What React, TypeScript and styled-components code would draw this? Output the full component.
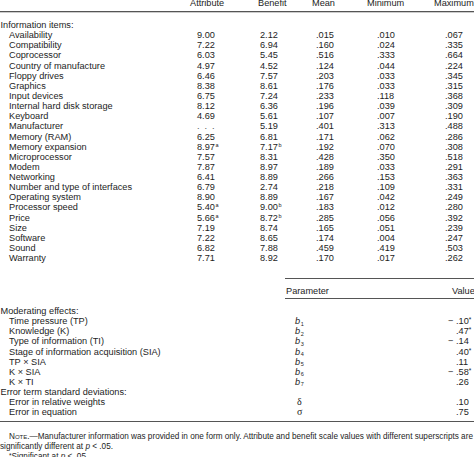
import React from 'react';
import styled, { createGlobalStyle } from 'styled-components';

const Global = createGlobalStyle`
  html, body { margin: 0; padding: 0; background: #fff; overflow: hidden; }
  body { font-family: "Liberation Sans", Arial, Helvetica, sans-serif; color: #1d1d1d; }
`;

const COLS = '185px 65px 55px 55px 65px 75px';
const RULE = '1px solid #555';

const Page = styled.div`
  width: 500px;
  margin-top: -2px;
  font-size: 9.2px;
  line-height: 10.15px;
`;

const HeadRow = styled.div`
  display: grid;
  grid-template-columns: ${COLS};
  padding-bottom: 3px;
  border-bottom: ${RULE};
  box-shadow: 0 0.6px 0 #aaa;
  width: 474px;
`;

const Body = styled.div`
  padding-top: 7.8px;
`;

const Row = styled.div`
  display: grid;
  grid-template-columns: ${COLS};
  height: 10.15px;
  white-space: nowrap;
`;

const Label = styled.div<{ $indent?: boolean }>`
  padding-left: ${p => (p.$indent ? 9 : 0.5)}px;
  white-space: nowrap;
`;

const Cell = styled.div<{ $pad: number }>`
  padding-left: ${p => p.$pad}px;
  white-space: nowrap;
`;

const Sup = styled.sup`
  font-size: 5.5px;
  line-height: 0;
  vertical-align: 3px;
  margin-left: 0.5px;
`;

const Dots = styled.span`
  letter-spacing: 1.2px;
  color: #555;
`;

const LOWER = '285px 155px 60px';

const Lower = styled.div`
  margin-top: 14.4px;
`;

const ParamHead = styled.div`
  display: grid;
  grid-template-columns: ${LOWER};
`;

const ParamHeadCell = styled.div<{ $pad: number }>`
  padding: 7.2px 0 1.5px ${p => p.$pad}px;
  border-top: ${RULE};
  border-bottom: ${RULE};
  white-space: nowrap;
`;

const LowerBody = styled.div`
  padding-top: 7.4px;
  padding-bottom: 3.6px;
  border-bottom: ${RULE};
  width: 474px;
`;

const LowerRow = styled.div`
  display: grid;
  grid-template-columns: ${LOWER};
  height: 10.15px;
  white-space: nowrap;
`;

const Param = styled.div<{ $pad: number }>`
  padding-left: ${p => p.$pad}px;
`;

const ParamB = styled.span`
  font-style: italic;
`;

const Sub = styled.sub`
  font-size: 5.5px;
  line-height: 0;
  vertical-align: -1.5px;
  margin-left: 0.5px;
`;

const Greek = styled.span`
  font-family: "Liberation Serif", "DejaVu Serif", serif;
  font-size: 10px;
`;

const Value = styled.div`
  padding-left: 8px;
  white-space: nowrap;
`;

const Sign = styled.span`
  width: 8px;
  display: inline-block;
`;

const Star = styled.span`
  display: inline-block;
  font-size: 6.5px;
  line-height: 6px;
  vertical-align: top;
  margin-top: 1px;
`;

const Notes = styled.div`
  padding-top: 9.6px;
  font-size: 8.2px;
  line-height: 10px;
  white-space: nowrap;
`;

const NoteLine = styled.div<{ $indent?: boolean }>`
  padding-left: ${p => (p.$indent ? 9 : 0)}px;
`;

const SmallCaps = styled.span`
  font-variant: small-caps;
`;

const Em = styled.i``;

type Item = [string, string, string, string, string, string];

const items: Item[] = [
  ['Availability', '9.00', '2.12', '.015', '.010', '.067'],
  ['Compatibility', '7.22', '6.94', '.160', '.024', '.335'],
  ['Coprocessor', '6.03', '5.45', '.516', '.333', '.664'],
  ['Country of manufacture', '4.97', '4.52', '.124', '.044', '.224'],
  ['Floppy drives', '6.46', '7.57', '.203', '.033', '.345'],
  ['Graphics', '8.38', '8.61', '.176', '.033', '.315'],
  ['Input devices', '6.75', '7.24', '.233', '.118', '.368'],
  ['Internal hard disk storage', '8.12', '6.36', '.196', '.039', '.309'],
  ['Keyboard', '4.69', '5.61', '.107', '.007', '.190'],
  ['Manufacturer', '...', '5.19', '.401', '.313', '.488'],
  ['Memory (RAM)', '6.25', '6.81', '.171', '.062', '.286'],
  ['Memory expansion', '8.97^a', '7.17^b', '.192', '.070', '.308'],
  ['Microprocessor', '7.57', '8.31', '.428', '.350', '.518'],
  ['Modem', '7.87', '8.97', '.189', '.033', '.291'],
  ['Networking', '6.41', '8.89', '.266', '.153', '.363'],
  ['Number and type of interfaces', '6.79', '2.74', '.218', '.109', '.331'],
  ['Operating system', '8.90', '8.89', '.167', '.042', '.249'],
  ['Processor speed', '5.40^a', '9.00^b', '.183', '.012', '.280'],
  ['Price', '5.66^a', '8.72^b', '.285', '.056', '.392'],
  ['Size', '7.19', '8.74', '.165', '.051', '.239'],
  ['Software', '7.22', '8.65', '.174', '.004', '.247'],
  ['Sound', '6.82', '7.88', '.459', '.419', '.503'],
  ['Warranty', '7.71', '8.92', '.170', '.017', '.262'],
];

const heads: [string, number][] = [
  ['Attribute', 5],
  ['Benefit', 8],
  ['Mean', 7],
  ['Minimum', 7],
  ['Maximum', 9],
];

const numPads = [12, 10, 11, 17, 20];

function Num({ v }: { v: string }) {
  if (v === '...') return <Dots>. . .</Dots>;
  const [n, s] = v.split('^');
  return (
    <>
      {n}
      {s && <Sup>{s}</Sup>}
    </>
  );
}

type Effect = { label: string; b: number; sign: boolean; v: string; star: boolean };

const effects: Effect[] = [
  { label: 'Time pressure (TP)', b: 1, sign: true, v: '.10', star: true },
  { label: 'Knowledge (K)', b: 2, sign: false, v: '.47', star: true },
  { label: 'Type of information (TI)', b: 3, sign: true, v: '.14', star: false },
  { label: 'Stage of information acquisition (SIA)', b: 4, sign: false, v: '.40', star: true },
  { label: 'TP \u00d7 SIA', b: 5, sign: false, v: '.11', star: false },
  { label: 'K \u00d7 SIA', b: 6, sign: true, v: '.58', star: true },
  { label: 'K \u00d7 TI', b: 7, sign: false, v: '.26', star: false },
];

const errors: [string, string, string][] = [
  ['Error in relative weights', '\u03b4', '.10'],
  ['Error in equation', '\u03c3', '.75'],
];

export default function App() {
  return (
    <Page>
      <Global />
      <HeadRow>
        <div />
        {heads.map(([h, p]) => (
          <Cell key={h} $pad={p}>{h}</Cell>
        ))}
      </HeadRow>
      <Body>
        <Row>
          <Label>Information items:</Label>
        </Row>
        {items.map(it => (
          <Row key={it[0]}>
            <Label $indent>{it[0]}</Label>
            {it.slice(1).map((v, i) => (
              <Cell key={i} $pad={numPads[i]}>
                <Num v={v} />
              </Cell>
            ))}
          </Row>
        ))}
      </Body>
      <Lower>
        <ParamHead>
          <div />
          <ParamHeadCell $pad={1}>Parameter</ParamHeadCell>
          <ParamHeadCell $pad={12}>Value</ParamHeadCell>
        </ParamHead>
        <LowerBody>
          <LowerRow>
            <Label>Moderating effects:</Label>
          </LowerRow>
          {effects.map(e => (
            <LowerRow key={e.label}>
              <Label $indent>{e.label}</Label>
              <Param $pad={10}>
                <ParamB>b</ParamB>
                <Sub>{e.b}</Sub>
              </Param>
              <Value>
                <Sign>{e.sign ? '\u2212' : ''}</Sign>
                {e.v}
                {e.star && <Star>*</Star>}
              </Value>
            </LowerRow>
          ))}
          <LowerRow>
            <Label>Error term standard deviations:</Label>
          </LowerRow>
          {errors.map(([l, g, v]) => (
            <LowerRow key={l}>
              <Label $indent>{l}</Label>
              <Param $pad={12}>
                <Greek>{g}</Greek>
              </Param>
              <Value>
                <Sign />
                {v}
              </Value>
            </LowerRow>
          ))}
        </LowerBody>
        <Notes>
          <NoteLine $indent>
            N<SmallCaps>ote</SmallCaps>.—Manufacturer information was provided in one form only. Attribute and benefit scale values with different superscripts are
          </NoteLine>
          <NoteLine>
            significantly different at <Em>p</Em> &lt; .05.
          </NoteLine>
          <NoteLine $indent>
            <Star>*</Star>Significant at <Em>p</Em> &lt; .05.
          </NoteLine>
        </Notes>
      </Lower>
    </Page>
  );
}
